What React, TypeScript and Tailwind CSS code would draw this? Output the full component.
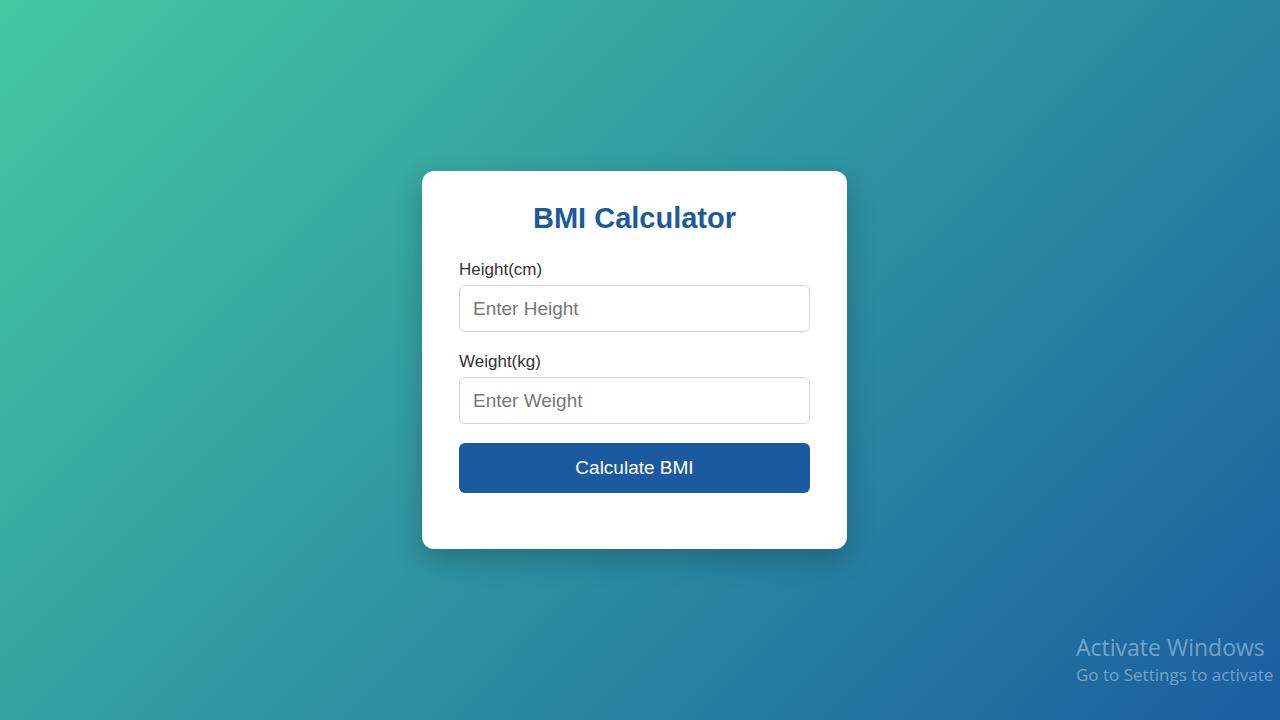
import React, { useState } from 'react';

function BmiCalculator() {
  const [height, setHeight] = useState('');
  const [weight, setWeight] = useState('');

  return (
    <div className="w-[425px] rounded-[12px] bg-white px-[37px] pt-[31px] pb-[56px] shadow-[0_10px_28px_rgba(0,0,0,0.22)]">
      <h1 className="text-center text-[29px] font-bold leading-[33px] text-[#1d5a9b]">BMI Calculator</h1>
      <form className="mt-[25px]" onSubmit={(e) => e.preventDefault()}>
        <label className="block text-[17px] leading-[20px] text-[#333333]">Height(cm)</label>
        <input
          type="number"
          value={height}
          onChange={(e) => setHeight(e.target.value)}
          placeholder="Enter Height"
          className="mt-[5px] block h-[47px] w-full rounded-[6px] border border-[#d4d4d4] px-[13px] text-[19px] text-[#333333] outline-none placeholder:text-[#777777]"
        />
        <label className="mt-[20px] block text-[17px] leading-[20px] text-[#333333]">Weight(kg)</label>
        <input
          type="number"
          value={weight}
          onChange={(e) => setWeight(e.target.value)}
          placeholder="Enter Weight"
          className="mt-[5px] block h-[47px] w-full rounded-[6px] border border-[#d4d4d4] px-[13px] text-[19px] text-[#333333] outline-none placeholder:text-[#777777]"
        />
        <button
          type="submit"
          className="mt-[19px] block h-[50px] w-full rounded-[6px] bg-[#1b5a9e] text-[19px] text-white"
        >
          Calculate BMI
        </button>
      </form>
    </div>
  );
}

export default function App() {
  return (
    <div
      className="relative flex h-[720px] w-full items-center justify-center overflow-hidden bg-[linear-gradient(135deg,#43c9a2,#1a5ea0)] pr-[11px]"
      style={{ fontFamily: '"Liberation Sans", Arial, sans-serif' }}
    >
      <BmiCalculator />
      <div
        className="absolute top-[632px] left-[1076px] whitespace-nowrap text-white/40"
        style={{ fontFamily: '"Open Sans", "Noto Sans", sans-serif' }}
      >
        <div className="text-[23px] leading-[31px]">Activate Windows</div>
        <div className="text-[17px] leading-[24px]">Go to Settings to activate</div>
      </div>
    </div>
  );
}
